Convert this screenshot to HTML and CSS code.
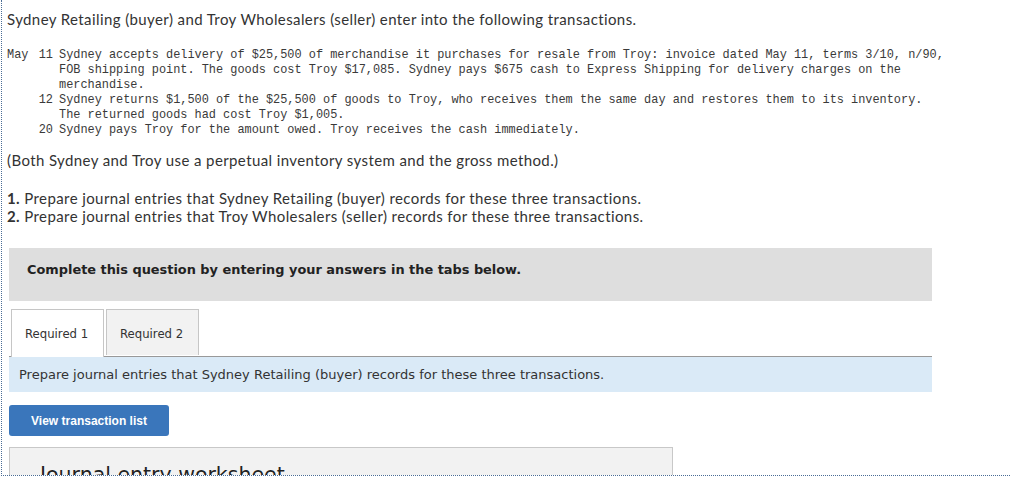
FILE: index.html
```html
<!DOCTYPE html>
<html>
<head>
<meta charset="utf-8">
<link rel="stylesheet" href="styles.css">
</head>
<body>
<div class="frame">
  <p class="intro">Sydney Retailing (buyer) and Troy Wholesalers (seller) enter into the following transactions.</p>
  <div class="txns">
    <div class="mon">May</div><div class="day">11</div><div class="desc">Sydney accepts delivery of $25,500 of merchandise it purchases for resale from Troy: invoice dated May 11, terms 3/10, n/90,<br>FOB shipping point. The goods cost Troy $17,085. Sydney pays $675 cash to Express Shipping for delivery charges on the<br>merchandise.</div>
    <div class="mon"></div><div class="day">12</div><div class="desc">Sydney returns $1,500 of the $25,500 of goods to Troy, who receives them the same day and restores them to its inventory.<br>The returned goods had cost Troy $1,005.</div>
    <div class="mon"></div><div class="day">20</div><div class="desc">Sydney pays Troy for the amount owed. Troy receives the cash immediately.</div>
  </div>
  <p class="note">(Both Sydney and Troy use a perpetual inventory system and the gross method.)</p>
  <ol class="reqs">
    <li><b>1.</b> Prepare journal entries that Sydney Retailing (buyer) records for these three transactions.</li>
    <li><b>2.</b> Prepare journal entries that Troy Wholesalers (seller) records for these three transactions.</li>
  </ol>
  <div class="banner">Complete this question by entering your answers in the tabs below.</div>
  <div class="tabs">
    <div class="tab active">Required 1</div>
    <div class="tab">Required 2</div>
  </div>
  <div class="instr">Prepare journal entries that Sydney Retailing (buyer) records for these three transactions.</div>
  <button class="btn">View transaction list</button>
  <div class="sheet">
    <div class="sheet-title">Journal entry worksheet</div>
  </div>
</div>
</body>
</html>
```
FILE: styles.css
```css
html, body {
  margin: 0;
  padding: 0;
  background: #fff;
}
.frame {
  margin-left: 1px;
  border-left: 1px dotted #4a6d96;
  border-bottom: 1px dotted #4a6d96;
  height: 476px;
  box-sizing: border-box;
  overflow: hidden;
  padding-left: 5px;
  font-family: Lato, "Open Sans", sans-serif;
  color: #333;
}
.intro {
  margin: 10px 0 0 0;
  font-size: 15px;
  line-height: 18px;
  letter-spacing: 0.4px;
}
.txns {
  margin-top: 20px;
  display: grid;
  grid-template-columns: 23px 29px 1fr;
  font-family: "Liberation Mono", "DejaVu Sans Mono", monospace;
  font-size: 11.9px;
  line-height: 15px;
  color: #3a3a3a;
}
.day {
  text-align: right;
  padding-right: 6px;
}
.note {
  margin: 13px 0 0 0;
  font-size: 15px;
  line-height: 18px;
  letter-spacing: 0.4px;
}
.reqs {
  list-style: none;
  margin: 20px 0 0 0;
  padding: 0;
  font-size: 15px;
  line-height: 18px;
  letter-spacing: 0.4px;
}
.reqs b {
  font-weight: 700;
}
.banner {
  margin: 23px 0 0 2px;
  width: 923px;
  height: 53px;
  box-sizing: border-box;
  background: #dedede;
  padding: 14px 18px 0 18px;
  font-family: "DejaVu Sans", Verdana, sans-serif;
  font-weight: bold;
  font-size: 12.9px;
  line-height: 16px;
  color: #222;
}
.tabs {
  margin: 8px 0 0 2px;
  width: 923px;
  display: flex;
  gap: 2px;
  padding-left: 2px;
  box-sizing: border-box;
  border-bottom: 1px solid #999;
  height: 48px;
}
.tab {
  width: 93px;
  height: 46px;
  box-sizing: border-box;
  border: 1px solid #c6c6c6;
  border-bottom: none;
  background: #f2f2f2;
  padding: 16px 0 0 13px;
  font-family: "DejaVu Sans", Verdana, sans-serif;
  font-size: 11.7px;
  line-height: 16px;
  color: #333;
}
.tab.active {
  background: #fff;
  height: 48px;
}
.instr {
  margin: 0 0 0 2px;
  width: 923px;
  height: 35px;
  box-sizing: border-box;
  background: #daeaf7;
  padding: 10px 0 0 10px;
  font-family: "DejaVu Sans", Verdana, sans-serif;
  font-size: 13px;
  line-height: 16px;
  color: #333;
}
.btn {
  display: block;
  margin: 13px 0 0 2px;
  width: 160px;
  height: 31px;
  border: none;
  border-radius: 3px;
  background: #3a76bb;
  color: #fff;
  font-family: "Liberation Sans", Arial, sans-serif;
  font-weight: bold;
  font-size: 12px;
  padding: 0;
}
.sheet {
  margin: 11px 0 0 2px;
  width: 664px;
  height: 80px;
  box-sizing: border-box;
  background: #f2f2f2;
  border: 1px solid #c8c8c8;
  padding: 14px 0 0 30px;
}
.sheet-title {
  font-family: "DejaVu Sans", Verdana, sans-serif;
  font-size: 20.5px;
  line-height: 26px;
  color: #222;
}
```
